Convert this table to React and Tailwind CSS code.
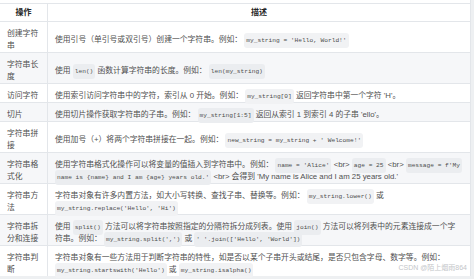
import React from 'react';

// code segments are objects, plain text segments are strings
const c = (t) => ({ code: t });

const rows = [
    {
        op: ['创建字符', '串'],
        lines: [['使用引号（单引号或双引号）创建一个字符串。例如： ', c("my_string = 'Hello, World!'")]],
    },
    {
        op: ['字符串长', '度'],
        lines: [['使用 ', c('len()'), ' 函数计算字符串的长度。例如： ', c('len(my_string)')]],
    },
    {
        op: ['访问字符'],
        lines: [['使用索引访问字符串中的字符，索引从 0 开始。例如： ', c('my_string[0]'), " 返回字符串中第一个字符 'H'。"]],
    },
    {
        op: ['切片'],
        lines: [['使用切片操作获取字符串的子串。例如： ', c('my_string[1:5]'), " 返回从索引 1 到索引 4 的子串 'ello'。"]],
    },
    {
        op: ['字符串拼', '接'],
        lines: [['使用加号（+）将两个字符串拼接在一起。例如： ', c("new_string = my_string + ' Welcome!'")]],
    },
    {
        op: ['字符串格', '式化'],
        lines: [
            ['使用字符串格式化操作可以将变量的值插入到字符串中。例如： ', c("name = 'Alice'"), ' <br> ', c('age = 25'), ' <br> ', c("message = f'My")],
            [c("name is {name} and I am {age} years old.'"), ' <br> 会得到 \'My name is Alice and I am 25 years old.\''],
        ],
    },
    {
        op: ['字符串方', '法'],
        lines: [
            ['字符串对象有许多内置方法，如大小写转换、查找子串、替换等。例如： ', c('my_string.lower()'), ' 或'],
            [c("my_string.replace('Hello', 'Hi')")],
        ],
    },
    {
        op: ['字符串拆', '分和连接'],
        lines: [
            ['使用 ', c('split()'), ' 方法可以将字符串按照指定的分隔符拆分成列表。使用 ', c('join()'), ' 方法可以将列表中的元素连接成一个字'],
            ['符串。例如： ', c("my_string.split(',')"), ' 或 ', c("' '.join(['Hello', 'World'])")],
        ],
    },
    {
        op: ['字符串判', '断'],
        lines: [
            ['字符串对象有一些方法用于判断字符串的特性，如是否以某个子串开头或结尾，是否只包含字母、数字等。例如：'],
            [c("my_string.startswith('Hello')"), ' 或 ', c('my_string.isalpha()')],
        ],
    },
];

function Segment({ seg, shaded }) {
    if (typeof seg === 'string') return <span>{seg}</span>;
    return (
        <code
            className={`font-['Liberation_Mono',monospace] text-[6.2px] leading-none text-[#4d4d4d] rounded-[3px] px-[2px] py-[4px] ${shaded ? 'bg-[#ebedf0]' : 'bg-[#f1f2f4]'}`}
        >
            {seg.code}
        </code>
    );
}

export default function App() {
    return (
        <div className="w-[474px] h-[279px] overflow-hidden bg-[#eef0f2] flex font-['Liberation_Sans','Noto_Sans_CJK_SC',sans-serif] text-[7.8px] text-[#505050]">
            <div className="relative w-[471px] self-start bg-white pt-[3px] border-r border-[#e3e6ea]">
                {/* header */}
                <div className="grid grid-cols-[48px_1fr] h-[18px] border-t border-[#e3e6ea] font-bold text-[#262626] text-[8px]">
                    <div className="flex items-center justify-center border-r border-[#e3e6ea]">操作</div>
                    <div className="flex items-center justify-center">描述</div>
                </div>

                {rows.map((row, i) => {
                    const shaded = i % 2 === 1;
                    return (
                        <div
                            key={i}
                            className={`grid grid-cols-[48px_1fr] border-t border-[#e3e6ea] leading-[12px] ${shaded ? 'bg-[#f6f7f9]' : 'bg-white'}`}
                        >
                            <div className="border-r border-[#e3e6ea] pl-[7px] pt-[6px]">
                                {row.op.map((l, j) => (
                                    <div key={j} className="whitespace-nowrap">{l}</div>
                                ))}
                            </div>
                            <div className="pl-[7px] pt-[6px] flex flex-col justify-center">
                                {row.lines.map((line, j) => (
                                    <div key={j} className="whitespace-pre">
                                        {line.map((seg, k) => (
                                            <Segment key={k} seg={seg} shaded={shaded} />
                                        ))}
                                    </div>
                                ))}
                            </div>
                        </div>
                    );
                })}

                {/* watermark */}
                <div className="absolute right-[3px] bottom-[3px] text-[7px] text-[#c4c6c9] whitespace-nowrap">
                    CSDN @陌上烟雨864
                </div>
            </div>
        </div>
    );
}
